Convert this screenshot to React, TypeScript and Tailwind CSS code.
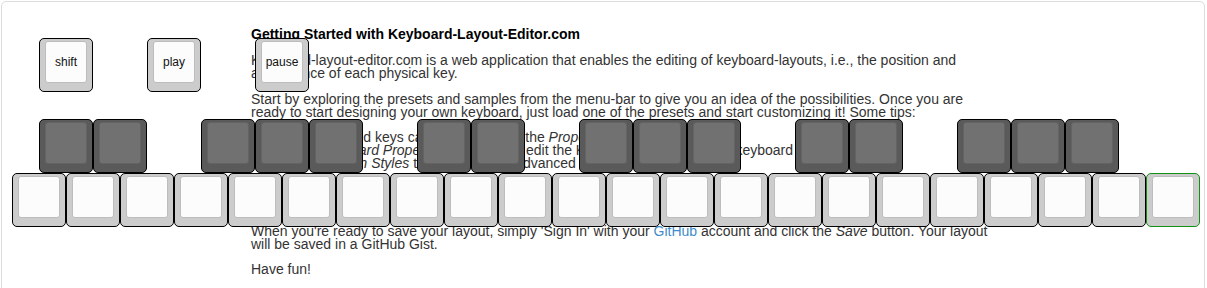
import React from 'react';

type Key = { x: number; y: number; label?: string; dark?: boolean; selected?: boolean };

const UNIT = 54;

const keys: Key[] = [
  { x: 0.5, y: 0.5, label: 'shift' },
  { x: 2.5, y: 0.5, label: 'play' },
  { x: 4.5, y: 0.5, label: 'pause' },
  ...[0.5, 1.5, 3.5, 4.5, 5.5, 7.5, 8.5, 10.5, 11.5, 12.5, 14.5, 15.5, 17.5, 18.5, 19.5].map((x) => ({ x, y: 2, dark: true })),
  ...Array.from({ length: 22 }, (_, i) => ({ x: i, y: 3, selected: i === 21 })),
];

const KeyCap: React.FC<{ k: Key }> = ({ k }) => {
  const outer = k.dark
    ? 'bg-[#5a5a5a] border-black rounded-[5px]'
    : k.selected
    ? 'bg-[#cccccc] border-[#149014] rounded-[5px]'
    : 'bg-[#cccccc] border-black rounded-[5px]';
  const inner = k.dark ? 'bg-[#717171] border-[#636363]' : 'bg-[#fcfcfc] border-[#bdbdbd]';
  return (
    <div
      className={`absolute w-[54px] h-[54px] box-border border flex pt-[2px] px-[5px] pb-[8px] ${outer}`}
      style={{ left: k.x * UNIT, top: k.y * UNIT }}
    >
      <div className={`flex-1 box-border border rounded-[3px] flex items-center justify-center ${inner}`}>
        {k.label && <span className="text-[12px] leading-none text-[#111]">{k.label}</span>}
      </div>
    </div>
  );
};

export default function App() {
  return (
    <div className="h-[288px] overflow-hidden bg-white" style={{ fontFamily: '"Liberation Sans", Arial, sans-serif' }}>
      <div className="relative ml-[1px] mt-[1px] w-[1204px] h-[320px] border border-[#dddddd] rounded-t-[5px] pl-[249px] pt-[26px] text-[14px] leading-[13px] text-[#333]">
        <div className="w-[745px]">
          <h4 className="font-bold mb-[13px] text-black">Getting Started with Keyboard-Layout-Editor.com</h4>
          <p className="mb-[13px]">
            Keyboard-layout-editor.com is a web application that enables the editing of keyboard-layouts, i.e., the position and
            appearance of each physical key.
          </p>
          <p className="mb-[12px]">
            Start by exploring the presets and samples from the menu-bar to give you an idea of the possibilities. Once you are
            ready to start designing your own keyboard, just load one of the presets and start customizing it! Some tips:
          </p>
          <ul className="list-disc pl-[40px] mb-[14px]">
            <li>The selected keys can be modified in the <i>Properties</i> tab.</li>
            <li>The <i>Keyboard Properties</i> tab lets you edit the Keyboard metadata of its keyboard layout.</li>
            <li>The <i>Custom Styles</i> tab lets you use advanced CSS styling.</li>
          </ul>
          <p className="mb-[15px]">
            You can also use the keyboard shortcuts to quickly move, resize and recolor the selected keys; press '?' at any time to
            view the complete list of the available shortcuts, along with other tips for more advanced users.
          </p>
          <p className="mb-[12px]">
            When you're ready to save your layout, simply 'Sign In' with your{' '}
            <a className="text-[#428bca]">GitHub</a> account and click the <i>Save</i> button. Your layout will be saved in a
            GitHub Gist.
          </p>
          <p>Have fun!</p>
        </div>
        <div className="absolute left-[10px] top-[9px]">
          {keys.map((k, i) => (
            <KeyCap key={i} k={k} />
          ))}
        </div>
      </div>
    </div>
  );
}
